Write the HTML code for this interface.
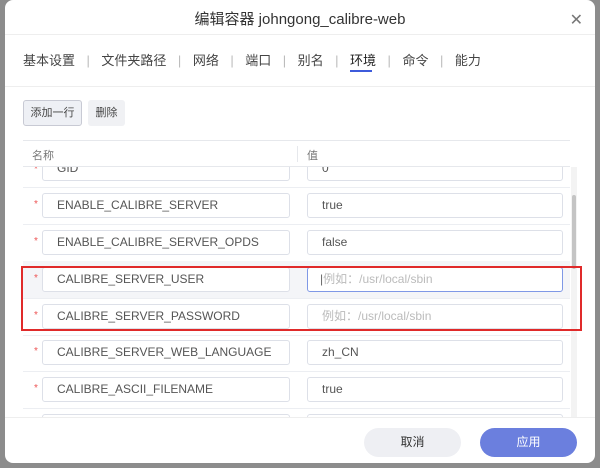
<!DOCTYPE html><html><head><meta charset="utf-8"><style>
*{box-sizing:border-box;margin:0;padding:0}
body{width:600px;height:468px;background:#8c8c8c;font-family:"Liberation Sans","Noto Sans CJK SC",sans-serif;position:relative;overflow:hidden}
.dlg{position:absolute;left:5px;top:0;width:590px;height:463px;background:#fff;border-radius:8px;overflow:hidden}
.a{position:absolute}
.title{left:0;width:590px;top:8px;text-align:center;font-size:15px;color:#333}
.tabs{top:50px;left:18px;font-size:13px;color:#444;white-space:nowrap}
.tabs span{display:inline-block}
.sep{color:#bbb;margin:0 11.5px}
.inp{position:absolute;height:25px;border:1px solid #dde0e8;border-radius:3px;font-size:12px;color:#555;line-height:23px;padding-left:14px;background:#fff}
.ast{position:absolute;color:#e55;font-size:10px}
.rowline{position:absolute;left:18px;width:547px;height:1px;background:#eceef2}
</style></head><body>
<div class="dlg">
<div class="a title">编辑容器 johngong_calibre-web</div>
<div class="a" style="right:12px;top:10px;font-size:16px;color:#777">✕</div>
<div class="a" style="left:0;top:34px;width:590px;height:1px;background:#eee"></div>
<div class="a tabs"><span>基本设置</span><span class="sep">|</span><span>文件夹路径</span><span class="sep">|</span><span>网络</span><span class="sep">|</span><span>端口</span><span class="sep">|</span><span>别名</span><span class="sep">|</span><span style="color:#222">环境</span><span class="sep">|</span><span>命令</span><span class="sep">|</span><span>能力</span></div>
<div class="a" style="left:345px;top:70px;width:22px;height:2px;background:#3d5bdb"></div>
<div class="a" style="left:0;top:86px;width:590px;height:1px;background:#eee"></div>
<div class="a" style="left:18px;top:100px;width:59px;height:26px;border:1px solid #c8cad4;border-radius:3px;background:#eef0f5;font-size:11px;color:#444;text-align:center;line-height:24px">添加一行</div>
<div class="a" style="left:83px;top:100px;width:37px;height:26px;border-radius:3px;background:#f0f1f4;font-size:11px;color:#444;text-align:center;line-height:26px">删除</div>
<div class="rowline" style="top:140px;background:#e6e8ec"></div>
<div class="a" style="left:27px;top:147px;font-size:11px;color:#777">名称</div>
<div class="a" style="left:292px;top:146px;width:1px;height:16px;background:#e6e8ec"></div>
<div class="a" style="left:302px;top:147px;font-size:11px;color:#777">值</div>
<div class="a" style="left:18px;top:166px;width:547px;height:1px;background:#e6e8ec"></div>
<div class="a" style="left:0;top:167px;width:590px;height:250px;overflow:hidden">
<div class="a" style="left:0;top:0;width:590px;height:250px">
<div class="ast" style="left:29px;top:-3px">*</div>
<div class="inp" style="left:37px;top:-11px;width:248px">GID</div>
<div class="inp" style="left:302px;top:-11px;width:256px">0</div>
<div class="rowline" style="top:20px"></div>
<div class="ast" style="left:29px;top:32px">*</div>
<div class="inp" style="left:37px;top:26px;width:248px">ENABLE_CALIBRE_SERVER</div>
<div class="inp" style="left:302px;top:26px;width:256px">true</div>
<div class="rowline" style="top:57px"></div>
<div class="ast" style="left:29px;top:69px">*</div>
<div class="inp" style="left:37px;top:63px;width:248px">ENABLE_CALIBRE_SERVER_OPDS</div>
<div class="inp" style="left:302px;top:63px;width:256px">false</div>
<div class="a" style="left:18px;top:94px;width:547px;height:37px;background:#f4f5f8"></div>
<div class="ast" style="left:29px;top:106px">*</div>
<div class="inp" style="left:37px;top:100px;width:248px">CALIBRE_SERVER_USER</div>
<div class="inp" style="left:302px;top:100px;width:256px;border-color:#7f98e6;color:#bbb;padding-left:12px"><span style="color:#666">|</span>例如：/usr/local/sbin</div>
<div class="rowline" style="top:131px"></div>
<div class="ast" style="left:29px;top:143px">*</div>
<div class="inp" style="left:37px;top:137px;width:248px">CALIBRE_SERVER_PASSWORD</div>
<div class="inp" style="left:302px;top:137px;width:256px;color:#bbb">例如：/usr/local/sbin</div>
<div class="rowline" style="top:168px"></div>
<div class="ast" style="left:29px;top:179px">*</div>
<div class="inp" style="left:37px;top:173px;width:248px">CALIBRE_SERVER_WEB_LANGUAGE</div>
<div class="inp" style="left:302px;top:173px;width:256px">zh_CN</div>
<div class="rowline" style="top:204px"></div>
<div class="ast" style="left:29px;top:216px">*</div>
<div class="inp" style="left:37px;top:210px;width:248px">CALIBRE_ASCII_FILENAME</div>
<div class="inp" style="left:302px;top:210px;width:256px">true</div>
<div class="rowline" style="top:241px"></div>
<div class="inp" style="left:37px;top:247px;width:248px"></div>
<div class="inp" style="left:302px;top:247px;width:256px"></div>
</div>
<div class="a" style="left:566px;top:0;width:6px;height:250px;background:#f3f3f3"></div>
<div class="a" style="left:567px;top:28px;width:4px;height:74px;background:#c4c4c4;border-radius:2px"></div>
</div>
<div class="a" style="left:16px;top:266px;width:561px;height:65px;border:2px solid #e02a2a"></div>
<div class="a" style="left:0;top:417px;width:590px;height:1px;background:#eee"></div>
<div class="a" style="left:359px;top:428px;width:97px;height:29px;border-radius:15px;background:#eeeff3;font-size:12px;color:#333;text-align:center;line-height:29px">取消</div>
<div class="a" style="left:475px;top:428px;width:97px;height:29px;border-radius:15px;background:#6b7fde;font-size:12px;color:#fff;text-align:center;line-height:29px">应用</div>
</div>
</body></html>
